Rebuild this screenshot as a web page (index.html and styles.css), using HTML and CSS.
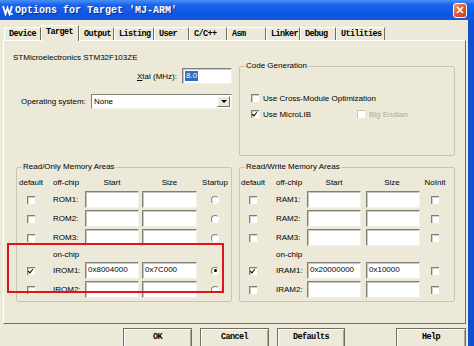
FILE: index.html
```html
<!DOCTYPE html>
<html lang="en">
<head>
  <meta charset="UTF-8" />
  <title>Options for Target 'MJ-ARM'</title>
  <link rel="stylesheet" href="styles.css">
</head>
<body>
  <div class="window">
    <div class="titlebar">
      <svg class="app-icon" viewBox="0 0 11 12">
        <polyline points="1,2 3.5,10 5.5,4 7.5,10 10,2" fill="none" stroke="#fff" stroke-width="1.8" />
        <rect x="8.5" y="9" width="2" height="2" fill="#fff" />
      </svg>
      <span class="title">Options for Target 'MJ-ARM'</span>
      <span class="close">
        <svg viewBox="0 0 8 8" width="8" height="8">
          <path d="M1 1 L7 7 M7 1 L1 7" stroke="#fff" stroke-width="1.7" />
        </svg>
      </span>
    </div>

    <div class="client">
      <div class="tabs">
        <span class="tab">Device</span>
        <span class="tab active">Target</span>
        <span class="tab">Output</span>
        <span class="tab">Listing</span>
        <span class="tab">User</span>
        <span class="tab">C/C++</span>
        <span class="tab">Asm</span>
        <span class="tab">Linker</span>
        <span class="tab">Debug</span>
        <span class="tab">Utilities</span>
      </div>

      <div class="panel">
        <div class="top">
          <div class="target-info">
            <div class="device">STMicroelectronics STM32F103ZE</div>
            <div class="xtal-row">
              <label><u>X</u>tal (MHz):</label>
              <span class="input xtal"><span class="selected">8.0</span></span>
            </div>
            <div class="os-row">
              <label>Operating system:</label>
              <span class="combo">None<span class="drop"></span></span>
            </div>
          </div>

          <fieldset class="group codegen">
            <legend>Code Generation</legend>
            <div class="opts">
              <div class="opt"><span class="chk"></span>Use Cross-Module Optimization</div>
              <div class="opt-row">
                <div class="opt wide"><span class="chk on"></span>Use MicroLIB</div>
                <div class="opt disabled"><span class="chk"></span>Big Endian</div>
              </div>
            </div>
          </fieldset>
        </div>

        <div class="memory">
          <fieldset class="group mem">
            <legend>Read/Only Memory Areas</legend>
            <div class="mem-grid rom">
              <span class="hd">default</span><span class="hd lbl">off-chip</span><span class="hd">Start</span><span class="hd">Size</span><span class="hd">Startup</span>

              <span class="chk"></span><span class="lbl">ROM1:</span><span class="input"></span><span class="input"></span><span class="radio"></span>
              <span class="chk"></span><span class="lbl">ROM2:</span><span class="input"></span><span class="input"></span><span class="radio"></span>
              <span class="chk"></span><span class="lbl">ROM3:</span><span class="input"></span><span class="input"></span><span class="radio"></span>

              <span></span><span class="lbl">on-chip</span><span></span><span></span><span></span>

              <span class="chk on"></span><span class="lbl">IROM1:</span><span class="input">0x8004000</span><span class="input">0x7C000</span><span class="radio on"></span>
              <span class="chk"></span><span class="lbl">IROM2:</span><span class="input"></span><span class="input"></span><span class="radio"></span>
            </div>
          </fieldset>

          <fieldset class="group mem">
            <legend>Read/Write Memory Areas</legend>
            <div class="mem-grid ram">
              <span class="hd">default</span><span class="hd lbl">off-chip</span><span class="hd">Start</span><span class="hd">Size</span><span class="hd">NoInit</span>

              <span class="chk"></span><span class="lbl">RAM1:</span><span class="input"></span><span class="input"></span><span class="chk"></span>
              <span class="chk"></span><span class="lbl">RAM2:</span><span class="input"></span><span class="input"></span><span class="chk"></span>
              <span class="chk"></span><span class="lbl">RAM3:</span><span class="input"></span><span class="input"></span><span class="chk"></span>

              <span></span><span class="lbl">on-chip</span><span></span><span></span><span></span>

              <span class="chk on"></span><span class="lbl">IRAM1:</span><span class="input">0x20000000</span><span class="input">0x10000</span><span class="chk"></span>
              <span class="chk"></span><span class="lbl">IRAM2:</span><span class="input"></span><span class="input"></span><span class="chk"></span>
            </div>
          </fieldset>
        </div>

        <div class="highlight"></div>
      </div>

      <div class="buttons">
        <button class="ok">OK</button>
        <button class="cancel">Cancel</button>
        <button class="defaults">Defaults</button>
        <button class="help">Help</button>
      </div>
    </div>
  </div>
</body>
</html>
```

FILE: styles.css
```css
* {
  box-sizing: border-box;
}

body {
  margin: 0;
  background: #ece9d8;
  font-family: "Liberation Sans", Arial, sans-serif;
  font-size: 8px;
  color: #000;
}

.window {
  width: 474px;
  height: 346px;
  overflow: hidden;
  display: flex;
  flex-direction: column;
  background: linear-gradient(90deg, #1d5ee0, #0f4fd4);
}

/* title bar */

.titlebar {
  height: 20px;
  flex-shrink: 0;
  display: flex;
  align-items: center;
  padding: 0 7px 0 2px;
  background: linear-gradient(#4a90f8, #1a62ea 25%, #0c56e4 75%, #1858d8);
  color: #fff;
}

.app-icon {
  width: 11px;
  height: 12px;
  margin-right: 2px;
}

.title {
  flex: 1;
  font: bold 10px "Liberation Mono", "DejaVu Sans Mono", monospace;
  text-shadow: 1px 1px #0a2c8c;
}

.close {
  width: 14px;
  height: 15px;
  border: 1px solid #fff;
  border-radius: 3px;
  background: linear-gradient(135deg, #f09a72, #e05a30 50%, #c83c14);
  display: flex;
  align-items: center;
  justify-content: center;
}

.client {
  flex: 1;
  width: 468px;
  background: #ece9d8;
  display: flex;
  flex-direction: column;
}

/* tabs */

.tabs {
  height: 20px;
  flex-shrink: 0;
  display: flex;
  align-items: flex-end;
  padding-left: 4px;
  font: bold 8.5px "Liberation Mono", "DejaVu Sans Mono", monospace;
  letter-spacing: -0.6px;
}

.tab {
  height: 13px;
  line-height: 12px;
  padding-left: 4px;
  border-top: 1px solid #fff;
  border-left: 1px solid #fff;
  border-right: 1px solid #716f64;
  white-space: nowrap;
}

.tab:nth-child(1) { width: 37px; }
.tab:nth-child(2) { width: 38px; }
.tab:nth-child(3) { width: 35px; }
.tab:nth-child(4) { width: 40px; }
.tab:nth-child(5) { width: 35px; }
.tab:nth-child(6) { width: 38px; }
.tab:nth-child(7) { width: 39px; }
.tab:nth-child(8) { width: 34px; }
.tab:nth-child(9) { width: 36px; }
.tab:nth-child(10) { width: 49px; }

.tab.active {
  height: 16px;
  line-height: 13px;
  margin-bottom: -1px;
  position: relative;
  z-index: 1;
  background: #ece9d8;
}

/* tab page */

.panel {
  position: relative;
  margin-left: 3px;
  width: 463px;
  height: 284px;
  flex-shrink: 0;
  border: 1px solid;
  border-color: #fff #716f64 #716f64 #fff;
  padding: 0 10px 0 12px;
}

.top {
  display: grid;
  grid-template-columns: 216px 216px;
  column-gap: 7px;
  margin-top: 11px;
  align-items: start;
}

.device {
  line-height: 12px;
  margin-left: -3px;
}

.xtal-row {
  margin-top: 4px;
  height: 16px;
  display: flex;
  justify-content: flex-end;
  align-items: center;
  gap: 5px;
}

.os-row {
  margin-top: 10px;
  height: 15px;
  display: flex;
  align-items: center;
  gap: 5px;
  padding-left: 5px;
}

.input {
  display: block;
  height: 17px;
  background: #fff;
  border: 1px solid;
  border-color: #808078 #f2f1ea #f2f1ea #808078;
  box-shadow: inset 1px 1px #c9c7bb;
  padding: 2px 0 0 2px;
  line-height: 10px;
}

.xtal {
  width: 50px;
  height: 16px;
}

.selected {
  display: inline-block;
  background: #316ac5;
  color: #fff;
  padding: 0 1px;
}

.combo {
  flex: 1;
  height: 15px;
  display: flex;
  align-items: center;
  justify-content: space-between;
  background: #fff;
  border: 1px solid;
  border-color: #808078 #f2f1ea #f2f1ea #808078;
  padding: 0 1px 0 2px;
}

.drop {
  width: 13px;
  height: 11px;
  background: #ece9d8;
  border: 1px solid;
  border-color: #fff #716f64 #716f64 #fff;
  position: relative;
}

.drop::after {
  content: "";
  position: absolute;
  left: 3px;
  top: 3px;
  border-left: 3px solid transparent;
  border-right: 3px solid transparent;
  border-top: 3px solid #000;
}

/* group boxes */

.group {
  margin: 0;
  padding: 0;
  min-width: 0;
  border: 1px solid #c8c5b3;
  border-radius: 2px;
}

.group legend {
  margin-left: 5px;
  padding: 0 1px;
  line-height: 10px;
}

.codegen {
  margin-top: 9px;
  height: 95px;
}

.opts {
  padding: 21px 0 0 11px;
  display: flex;
  flex-direction: column;
  gap: 4px;
}

.opt-row {
  display: flex;
}

.opt {
  height: 12px;
  display: flex;
  align-items: center;
  gap: 4px;
}

.opt.wide {
  width: 106px;
}

.opt.disabled {
  color: #aca899;
}

.opt.disabled .chk {
  border-color: #c5c2b2;
  box-shadow: none;
}

.chk {
  display: block;
  width: 8px;
  height: 8px;
  background: #fff;
  border-top: 1px solid #808078;
  border-left: 1px solid #808078;
  box-shadow: inset 1px 1px #d4d0c8;
  position: relative;
}

.chk.on::after {
  content: "";
  position: absolute;
  left: 1px;
  top: 0;
  width: 2px;
  height: 4px;
  border-right: 1.5px solid #000;
  border-bottom: 1.5px solid #000;
  transform: rotate(40deg);
}

.radio {
  display: block;
  width: 8px;
  height: 8px;
  border-radius: 50%;
  background: #fff;
  border: 1px solid;
  border-color: #808078 #fff #fff #808078;
  position: relative;
}

.radio.on::after {
  content: "";
  position: absolute;
  left: 1.5px;
  top: 1.5px;
  width: 3px;
  height: 3px;
  border-radius: 50%;
  background: #000;
}

/* memory areas */

.memory {
  display: grid;
  grid-template-columns: 216px 216px;
  column-gap: 7px;
  margin-top: 6px;
}

.mem {
  height: 140px;
  overflow: hidden;
}

.mem-grid {
  display: grid;
  grid-template-rows: 14px 17px 17px 17px 12px 17px 17px;
  row-gap: 2px;
  column-gap: 3px;
  align-items: center;
  justify-items: center;
  padding-top: 3px;
}

.mem-grid.rom {
  grid-template-columns: 28px 34px 54px 55px 30px;
}

.mem-grid.ram {
  grid-template-columns: 26px 35px 54px 56px 24px;
}

.mem-grid .input {
  width: 100%;
}

.mem-grid.ram .input:nth-child(5n+4) {
  width: 54px;
  justify-self: end;
}

.mem-grid .lbl {
  justify-self: start;
  padding-left: 5px;
}

.mem-grid.ram .lbl {
  padding-left: 7px;
}

.highlight {
  position: absolute;
  left: 3px;
  top: 202px;
  width: 217px;
  height: 50px;
  border: 2px solid #e0141c;
}

/* dialog buttons */

.buttons {
  margin-top: 4px;
  display: flex;
  justify-content: flex-end;
  gap: 8px;
  padding-right: 2px;
}

.buttons button {
  height: 22px;
  padding: 0 0 4px;
  background: #ece9d8;
  border: 1px solid #6f6d64;
  box-shadow: inset 1px 1px #fff, inset -1px -1px #aca899;
  font: bold 8.5px "Liberation Mono", "DejaVu Sans Mono", monospace;
  letter-spacing: -0.6px;
  color: #000;
}

.ok, .cancel, .help { width: 69px; }
.defaults { width: 68px; }
.help { margin-left: 43px; width: 70px; }
```
